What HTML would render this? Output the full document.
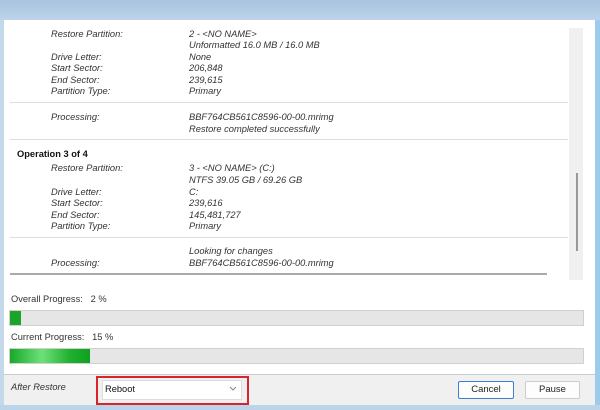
<!DOCTYPE html>
<html><head><style>
*{margin:0;padding:0;box-sizing:border-box}
body{width:600px;height:410px;overflow:hidden;background:#b9cfe6;font-family:"Liberation Sans",sans-serif;position:relative}
.abs{position:absolute}
.t{position:absolute;font-size:9.3px;font-style:italic;color:#333;white-space:nowrap;line-height:11px}
.sep{position:absolute;height:1px;background:#ddd;left:10px;width:558px}
</style></head><body>
<div class="abs" style="left:0;top:0;width:600px;height:20px;background:linear-gradient(#a9c3df,#bcd3ea)"></div>
<div class="abs" style="left:4px;top:20px;width:591px;height:386px;background:#fff"></div>
<div class="abs" style="left:595px;top:20px;width:5px;height:390px;background:#9ccbec"></div>
<div class="abs" style="left:0;top:20px;width:4px;height:390px;background:#c4d8ec"></div>
<div class="abs" style="left:0;top:405px;width:600px;height:5px;background:#bcd4ea"></div>
<div class="abs" style="left:569px;top:28px;width:14px;height:252px;background:#f0f0f0"></div>
<div class="abs" style="left:576px;top:173px;width:2px;height:78px;background:#999"></div>
<div class="abs" style="left:10px;top:273px;width:537px;height:2px;background:#aaa"></div>

<div class="t" style="left:51px;top:29px">Restore Partition:</div>
<div class="t" style="left:189px;top:29px">2 - &lt;NO NAME&gt;</div>
<div class="t" style="left:189px;top:40px">Unformatted 16.0 MB / 16.0 MB</div>
<div class="t" style="left:51px;top:52px">Drive Letter:</div><div class="t" style="left:189px;top:52px">None</div>
<div class="t" style="left:51px;top:63px">Start Sector:</div><div class="t" style="left:189px;top:63px">206,848</div>
<div class="t" style="left:51px;top:75px">End Sector:</div><div class="t" style="left:189px;top:75px">239,615</div>
<div class="t" style="left:51px;top:86px">Partition Type:</div><div class="t" style="left:189px;top:86px">Primary</div>
<div class="sep" style="top:102px"></div>
<div class="t" style="left:51px;top:112px">Processing:</div>
<div class="t" style="left:189px;top:112px">BBF764CB561C8596-00-00.mrimg</div>
<div class="t" style="left:189px;top:124px">Restore completed successfully</div>
<div class="sep" style="top:139px"></div>
<div class="t" style="left:17px;top:149px;font-style:normal;font-weight:bold;color:#111">Operation 3 of 4</div>
<div class="t" style="left:51px;top:163px">Restore Partition:</div>
<div class="t" style="left:189px;top:163px">3 - &lt;NO NAME&gt; (C:)</div>
<div class="t" style="left:189px;top:175px">NTFS 39.05 GB / 69.26 GB</div>
<div class="t" style="left:51px;top:187px">Drive Letter:</div><div class="t" style="left:189px;top:187px">C:</div>
<div class="t" style="left:51px;top:198px">Start Sector:</div><div class="t" style="left:189px;top:198px">239,616</div>
<div class="t" style="left:51px;top:210px">End Sector:</div><div class="t" style="left:189px;top:210px">145,481,727</div>
<div class="t" style="left:51px;top:221px">Partition Type:</div><div class="t" style="left:189px;top:221px">Primary</div>
<div class="sep" style="top:237px"></div>
<div class="t" style="left:189px;top:246px">Looking for changes</div>
<div class="t" style="left:51px;top:258px">Processing:</div>
<div class="t" style="left:189px;top:258px">BBF764CB561C8596-00-00.mrimg</div>

<div class="t" style="left:11px;top:294px;font-style:normal">Overall Progress:&nbsp;&nbsp; 2 %</div>
<div class="abs" style="left:9px;top:310px;width:575px;height:16px;background:#e6e6e6;border:1px solid #d0d0d0"></div>
<div class="abs" style="left:10px;top:311px;width:11px;height:14px;background:#1aa52a"></div>
<div class="t" style="left:11px;top:332px;font-style:normal">Current Progress:&nbsp;&nbsp; 15 %</div>
<div class="abs" style="left:9px;top:348px;width:575px;height:16px;background:#e6e6e6;border:1px solid #d0d0d0"></div>
<div class="abs" style="left:10px;top:349px;width:80px;height:14px;background:linear-gradient(90deg,#18a82a,#6ee07a 40%,#20b030 75%,#0fa020)"></div>

<div class="abs" style="left:4px;top:374px;width:591px;height:1px;background:#ccc"></div>
<div class="abs" style="left:4px;top:375px;width:591px;height:30px;background:#f0f0f0"></div>
<div class="t" style="left:11px;top:382px">After Restore</div>
<div class="abs" style="left:96px;top:376px;width:153px;height:29px;border:2px solid #d8242a"></div>
<div class="abs" style="left:102px;top:380px;width:140px;height:20px;background:#fff;border:1px solid #ddd"></div>
<div class="t" style="left:105px;top:384px;font-style:normal;color:#111">Reboot</div>
<svg class="abs" style="left:229px;top:386px" width="8" height="6"><path d="M1 1L4 4L7 1" fill="none" stroke="#888" stroke-width="1"/></svg>
<div class="abs" style="left:458px;top:381px;width:56px;height:18px;background:#fdfdfd;border:1px solid #3c7fd0;border-radius:2px;font-size:9.5px;text-align:center;line-height:16px;color:#222">Cancel</div>
<div class="abs" style="left:525px;top:381px;width:55px;height:18px;background:#fdfdfd;border:1px solid #ccc;border-radius:2px;font-size:9.5px;text-align:center;line-height:16px;color:#222">Pause</div>
</body></html>
